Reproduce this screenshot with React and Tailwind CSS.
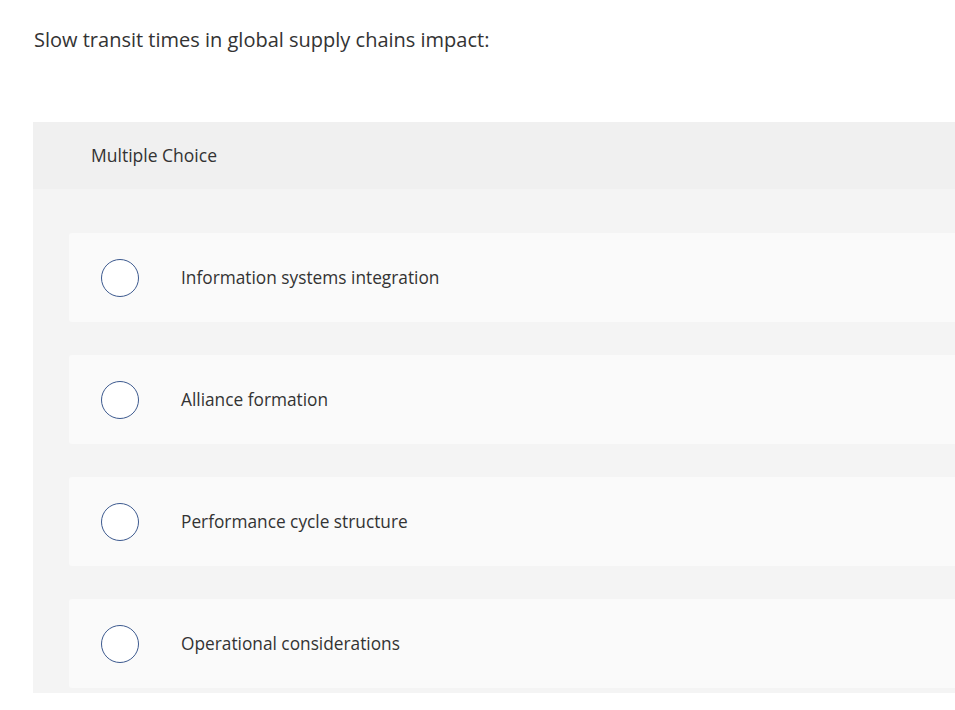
const options = [
  "Information systems integration",
  "Alliance formation",
  "Performance cycle structure",
  "Operational considerations",
];

export default function App() {
  return (
    <div className="w-[955px] h-[710px] overflow-hidden bg-white text-[#333] font-['Open_Sans',sans-serif]">
      <div className="pt-[26px] pl-[34px] text-[20px] leading-[28px]">
        Slow transit times in global supply chains impact:
      </div>

      <div className="ml-[33px] mt-[68px] w-[1000px]">
        <div className="h-[67px] bg-[#f0f0f0] pl-[58px] flex items-center text-[17.5px]">
          Multiple Choice
        </div>
        <div className="bg-[#f4f4f4] pt-[44px] pb-[5px] pl-[36px] flex flex-col gap-[33px]">
          {options.map((opt, i) => (
            <div key={i} className="h-[89px] rounded-[3px] bg-[#fafafa] flex items-center">
              <div className="ml-[32px] w-[38px] h-[38px] rounded-full border-[1.5px] border-[#3d5a8f] bg-white" />
              <div className="ml-[42px] text-[17.3px]">{opt}</div>
            </div>
          ))}
        </div>
      </div>
    </div>
  );
}
